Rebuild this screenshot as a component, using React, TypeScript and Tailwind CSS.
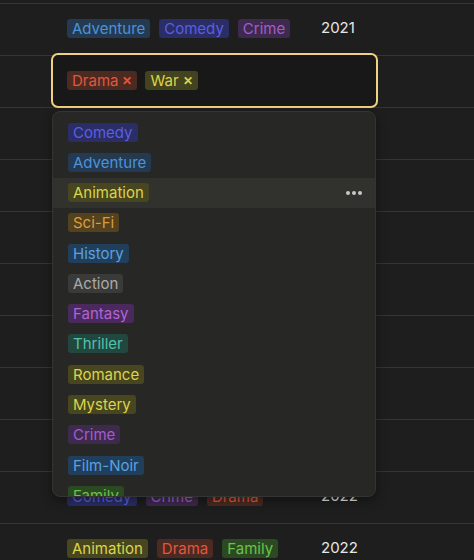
import React from "react";

const C: Record<string, string> = {
  Adventure: "bg-[#233a52] text-[#4d93d6]",
  Comedy: "bg-[#2a2d66] text-[#5b5fe0]",
  Crime: "bg-[#3d2a4e] text-[#a45ccc]",
  Drama: "bg-[#4b2a22] text-[#e0583c]",
  War: "bg-[#44431f] text-[#dcd447]",
  Animation: "bg-[#47461f] text-[#dcd44c]",
  "Sci-Fi": "bg-[#54421f] text-[#dc9c3c]",
  History: "bg-[#213f5a] text-[#5aa2e2]",
  Action: "bg-[#3a3a39] text-[#aaaaaa]",
  Fantasy: "bg-[#4a2a5c] text-[#b064d4]",
  Thriller: "bg-[#22473f] text-[#52c2aa]",
  Romance: "bg-[#47461f] text-[#dcd44c]",
  Mystery: "bg-[#47461f] text-[#dcd44c]",
  "Film-Noir": "bg-[#213f5a] text-[#5aa2e2]",
  Family: "bg-[#2b4a22] text-[#6cc24a]",
};

function Tag({ name, x }: { name: string; x?: boolean }) {
  return (
    <span
      className={`inline-flex h-[19px] items-center rounded-[3px] px-[5px] text-[15px] leading-none whitespace-nowrap ${C[name]}`}
    >
      {name}
      {x && <span className="ml-[4px] text-[12px] font-bold">✕</span>}
    </span>
  );
}

function Row({ tags, year }: { tags: string[]; year?: string }) {
  return (
    <div className="flex h-[52px] items-center border-b border-[#353535] pb-[2px]">
      <div className="flex w-[321px] gap-[9px] pl-[67px]">
        {tags.map((t) => (
          <Tag key={t} name={t} />
        ))}
      </div>
      {year && <div className="text-[15px] text-[#e6e6e6]">{year}</div>}
    </div>
  );
}

const items = [
  "Comedy",
  "Adventure",
  "Animation",
  "Sci-Fi",
  "History",
  "Action",
  "Fantasy",
  "Thriller",
  "Romance",
  "Mystery",
  "Crime",
  "Film-Noir",
  "Family",
];

export default function App() {
  return (
    <div
      className="relative h-[560px] w-[474px] overflow-hidden bg-[#1e1e1e]"
      style={{ fontFamily: "Inter, 'Noto Sans', sans-serif" }}
    >
      <div className="h-[4px] border-b border-[#353535]" />
      <Row tags={["Adventure", "Comedy", "Crime"]} year="2021" />
      <Row tags={[]} />
      <Row tags={[]} />
      <Row tags={[]} />
      <Row tags={[]} />
      <Row tags={[]} />
      <Row tags={[]} />
      <Row tags={[]} />
      <Row tags={[]} />
      <Row tags={["Comedy", "Crime", "Drama"]} year="2022" />
      <Row tags={["Animation", "Drama", "Family"]} year="2022" />

      <div className="absolute left-[51px] top-[53px] flex h-[55px] w-[327px] items-center gap-[8px] rounded-[7px] border-2 border-[#efd183] bg-[#181818] pl-[14px]">
        <Tag name="Drama" x />
        <Tag name="War" x />
      </div>

      <div className="absolute left-[52px] top-[111px] h-[386px] w-[324px] overflow-hidden rounded-[8px] border border-[#343432] bg-[#272725] pt-[5px] shadow-[0_4px_12px_rgba(0,0,0,0.4)]">
        {items.map((it) => (
          <div
            key={it}
            className={`flex h-[30.27px] items-center justify-between pl-[15px] pr-[13px] ${
              it === "Animation" ? "bg-[#31312e]" : ""
            }`}
          >
            <Tag name={it} />
            {it === "Animation" && (
              <span className="flex gap-[2px]">
                <span className="h-[4px] w-[4px] rounded-full bg-[#c8c8c8]" />
                <span className="h-[4px] w-[4px] rounded-full bg-[#c8c8c8]" />
                <span className="h-[4px] w-[4px] rounded-full bg-[#c8c8c8]" />
              </span>
            )}
          </div>
        ))}
      </div>
    </div>
  );
}
